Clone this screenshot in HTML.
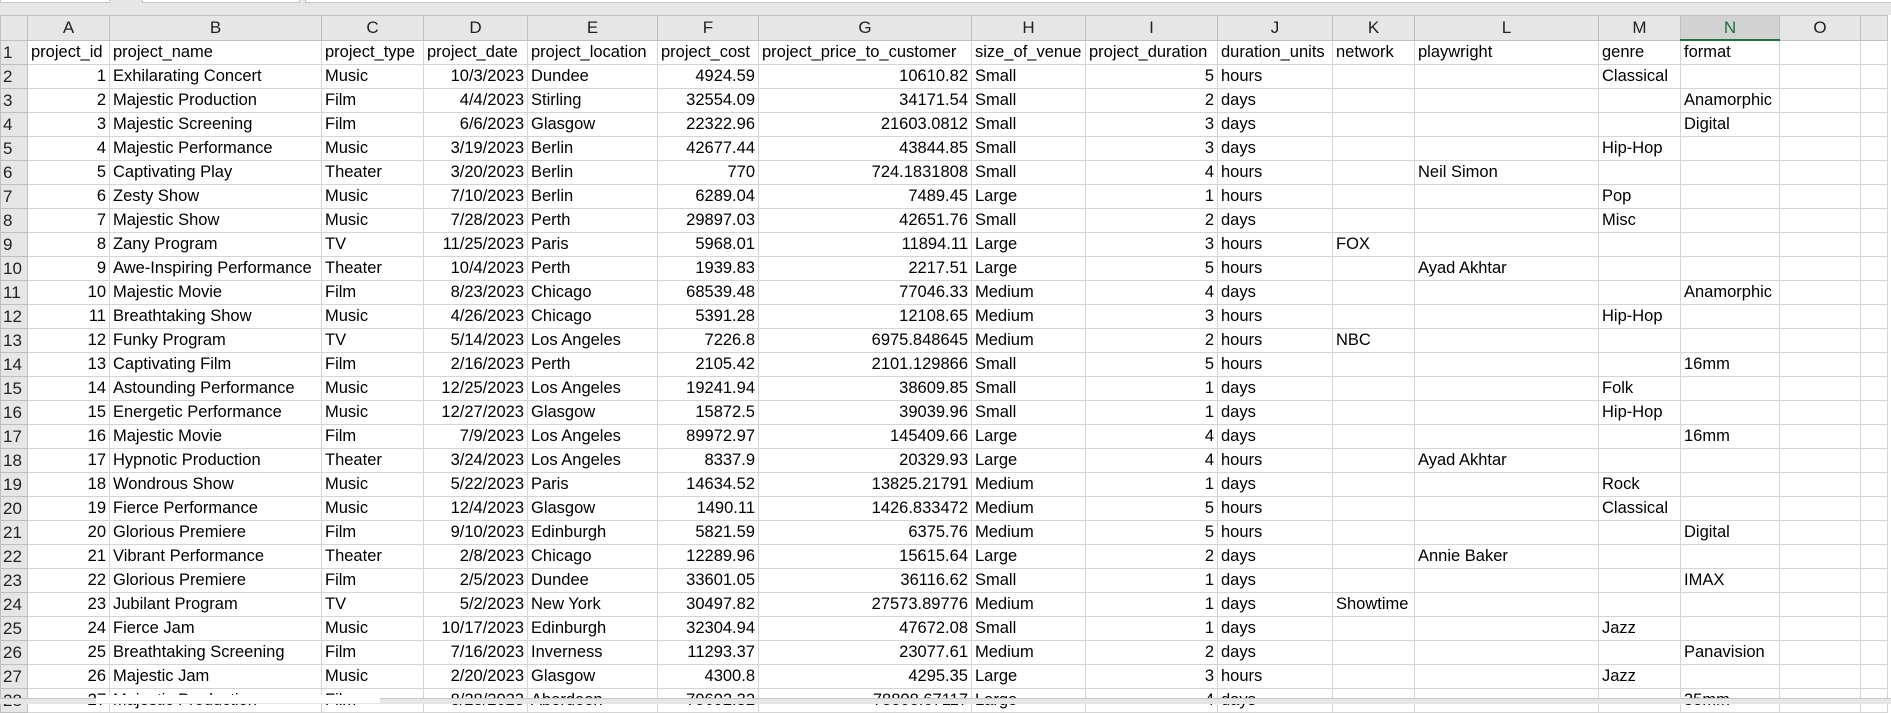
<!DOCTYPE html>
<html><head><meta charset="utf-8"><style>
html,body{margin:0;padding:0;width:1891px;height:703px;overflow:hidden;background:#fff;font-family:"Liberation Sans",sans-serif;}
#top{position:absolute;left:0;top:0;width:1891px;height:15px;background:#e6e6e6;}
.tabt{position:absolute;top:0;height:2px;background:#fff;border:1px solid #c6c6c6;border-top:none;}
#grid{position:absolute;left:0;top:15px;border-collapse:collapse;table-layout:fixed;}
#grid td{height:23px;border:1px solid #d4d4d4;padding:0 3px;font-size:16.5px;color:#000;white-space:nowrap;overflow:hidden;line-height:23px;}
#grid tr.h td{background:#e6e6e6;border-color:#bfbfbf;text-align:center;font-size:17px;color:#222;}
#grid td.rh{background:#e6e6e6;border-color:#bfbfbf;text-align:left;padding-left:2px;font-size:17px;color:#222;}
#grid td.r{text-align:right;}
#grid tr.h td.sel{background:#d2d2d2;color:#217346;border-bottom:2px solid #217346;}
#bot{position:absolute;left:0;top:698px;width:1891px;height:5px;background:#e6e6e6;border-top:1px solid #c6c6c6;}
#tab{position:absolute;left:96px;top:695px;width:284px;height:8px;background:#fff;}
</style></head><body>
<div id="top"><div class="tabt" style="left:0;width:108px"></div><div class="tabt" style="left:142px;width:156px"></div><div class="tabt" style="left:305px;width:1586px"></div></div>
<table id="grid">
<colgroup><col style="width:27px"><col style="width:82px"><col style="width:212px"><col style="width:102px"><col style="width:104px"><col style="width:130px"><col style="width:101px"><col style="width:213px"><col style="width:114px"><col style="width:132px"><col style="width:115px"><col style="width:82px"><col style="width:184px"><col style="width:82px"><col style="width:99px"><col style="width:81px"><col style="width:27px"></colgroup>
<tr class="h"><td style="background:#e6e6e6"></td><td>A</td><td>B</td><td>C</td><td>D</td><td>E</td><td>F</td><td>G</td><td>H</td><td>I</td><td>J</td><td>K</td><td>L</td><td>M</td><td class="sel">N</td><td>O</td><td></td></tr>
<tr><td class="rh">1</td><td>project_id</td><td>project_name</td><td>project_type</td><td>project_date</td><td>project_location</td><td>project_cost</td><td>project_price_to_customer</td><td>size_of_venue</td><td>project_duration</td><td>duration_units</td><td>network</td><td>playwright</td><td>genre</td><td>format</td><td></td><td></td></tr>
<tr><td class="rh">2</td><td class="r">1</td><td>Exhilarating Concert</td><td>Music</td><td class="r">10/3/2023</td><td>Dundee</td><td class="r">4924.59</td><td class="r">10610.82</td><td>Small</td><td class="r">5</td><td>hours</td><td></td><td></td><td>Classical</td><td></td><td></td><td></td></tr>
<tr><td class="rh">3</td><td class="r">2</td><td>Majestic Production</td><td>Film</td><td class="r">4/4/2023</td><td>Stirling</td><td class="r">32554.09</td><td class="r">34171.54</td><td>Small</td><td class="r">2</td><td>days</td><td></td><td></td><td></td><td>Anamorphic</td><td></td><td></td></tr>
<tr><td class="rh">4</td><td class="r">3</td><td>Majestic Screening</td><td>Film</td><td class="r">6/6/2023</td><td>Glasgow</td><td class="r">22322.96</td><td class="r">21603.0812</td><td>Small</td><td class="r">3</td><td>days</td><td></td><td></td><td></td><td>Digital</td><td></td><td></td></tr>
<tr><td class="rh">5</td><td class="r">4</td><td>Majestic Performance</td><td>Music</td><td class="r">3/19/2023</td><td>Berlin</td><td class="r">42677.44</td><td class="r">43844.85</td><td>Small</td><td class="r">3</td><td>days</td><td></td><td></td><td>Hip-Hop</td><td></td><td></td><td></td></tr>
<tr><td class="rh">6</td><td class="r">5</td><td>Captivating Play</td><td>Theater</td><td class="r">3/20/2023</td><td>Berlin</td><td class="r">770</td><td class="r">724.1831808</td><td>Small</td><td class="r">4</td><td>hours</td><td></td><td>Neil Simon</td><td></td><td></td><td></td><td></td></tr>
<tr><td class="rh">7</td><td class="r">6</td><td>Zesty Show</td><td>Music</td><td class="r">7/10/2023</td><td>Berlin</td><td class="r">6289.04</td><td class="r">7489.45</td><td>Large</td><td class="r">1</td><td>hours</td><td></td><td></td><td>Pop</td><td></td><td></td><td></td></tr>
<tr><td class="rh">8</td><td class="r">7</td><td>Majestic Show</td><td>Music</td><td class="r">7/28/2023</td><td>Perth</td><td class="r">29897.03</td><td class="r">42651.76</td><td>Small</td><td class="r">2</td><td>days</td><td></td><td></td><td>Misc</td><td></td><td></td><td></td></tr>
<tr><td class="rh">9</td><td class="r">8</td><td>Zany Program</td><td>TV</td><td class="r">11/25/2023</td><td>Paris</td><td class="r">5968.01</td><td class="r">11894.11</td><td>Large</td><td class="r">3</td><td>hours</td><td>FOX</td><td></td><td></td><td></td><td></td><td></td></tr>
<tr><td class="rh">10</td><td class="r">9</td><td>Awe-Inspiring Performance</td><td>Theater</td><td class="r">10/4/2023</td><td>Perth</td><td class="r">1939.83</td><td class="r">2217.51</td><td>Large</td><td class="r">5</td><td>hours</td><td></td><td>Ayad Akhtar</td><td></td><td></td><td></td><td></td></tr>
<tr><td class="rh">11</td><td class="r">10</td><td>Majestic Movie</td><td>Film</td><td class="r">8/23/2023</td><td>Chicago</td><td class="r">68539.48</td><td class="r">77046.33</td><td>Medium</td><td class="r">4</td><td>days</td><td></td><td></td><td></td><td>Anamorphic</td><td></td><td></td></tr>
<tr><td class="rh">12</td><td class="r">11</td><td>Breathtaking Show</td><td>Music</td><td class="r">4/26/2023</td><td>Chicago</td><td class="r">5391.28</td><td class="r">12108.65</td><td>Medium</td><td class="r">3</td><td>hours</td><td></td><td></td><td>Hip-Hop</td><td></td><td></td><td></td></tr>
<tr><td class="rh">13</td><td class="r">12</td><td>Funky Program</td><td>TV</td><td class="r">5/14/2023</td><td>Los Angeles</td><td class="r">7226.8</td><td class="r">6975.848645</td><td>Medium</td><td class="r">2</td><td>hours</td><td>NBC</td><td></td><td></td><td></td><td></td><td></td></tr>
<tr><td class="rh">14</td><td class="r">13</td><td>Captivating Film</td><td>Film</td><td class="r">2/16/2023</td><td>Perth</td><td class="r">2105.42</td><td class="r">2101.129866</td><td>Small</td><td class="r">5</td><td>hours</td><td></td><td></td><td></td><td>16mm</td><td></td><td></td></tr>
<tr><td class="rh">15</td><td class="r">14</td><td>Astounding Performance</td><td>Music</td><td class="r">12/25/2023</td><td>Los Angeles</td><td class="r">19241.94</td><td class="r">38609.85</td><td>Small</td><td class="r">1</td><td>days</td><td></td><td></td><td>Folk</td><td></td><td></td><td></td></tr>
<tr><td class="rh">16</td><td class="r">15</td><td>Energetic Performance</td><td>Music</td><td class="r">12/27/2023</td><td>Glasgow</td><td class="r">15872.5</td><td class="r">39039.96</td><td>Small</td><td class="r">1</td><td>days</td><td></td><td></td><td>Hip-Hop</td><td></td><td></td><td></td></tr>
<tr><td class="rh">17</td><td class="r">16</td><td>Majestic Movie</td><td>Film</td><td class="r">7/9/2023</td><td>Los Angeles</td><td class="r">89972.97</td><td class="r">145409.66</td><td>Large</td><td class="r">4</td><td>days</td><td></td><td></td><td></td><td>16mm</td><td></td><td></td></tr>
<tr><td class="rh">18</td><td class="r">17</td><td>Hypnotic Production</td><td>Theater</td><td class="r">3/24/2023</td><td>Los Angeles</td><td class="r">8337.9</td><td class="r">20329.93</td><td>Large</td><td class="r">4</td><td>hours</td><td></td><td>Ayad Akhtar</td><td></td><td></td><td></td><td></td></tr>
<tr><td class="rh">19</td><td class="r">18</td><td>Wondrous Show</td><td>Music</td><td class="r">5/22/2023</td><td>Paris</td><td class="r">14634.52</td><td class="r">13825.21791</td><td>Medium</td><td class="r">1</td><td>days</td><td></td><td></td><td>Rock</td><td></td><td></td><td></td></tr>
<tr><td class="rh">20</td><td class="r">19</td><td>Fierce Performance</td><td>Music</td><td class="r">12/4/2023</td><td>Glasgow</td><td class="r">1490.11</td><td class="r">1426.833472</td><td>Medium</td><td class="r">5</td><td>hours</td><td></td><td></td><td>Classical</td><td></td><td></td><td></td></tr>
<tr><td class="rh">21</td><td class="r">20</td><td>Glorious Premiere</td><td>Film</td><td class="r">9/10/2023</td><td>Edinburgh</td><td class="r">5821.59</td><td class="r">6375.76</td><td>Medium</td><td class="r">5</td><td>hours</td><td></td><td></td><td></td><td>Digital</td><td></td><td></td></tr>
<tr><td class="rh">22</td><td class="r">21</td><td>Vibrant Performance</td><td>Theater</td><td class="r">2/8/2023</td><td>Chicago</td><td class="r">12289.96</td><td class="r">15615.64</td><td>Large</td><td class="r">2</td><td>days</td><td></td><td>Annie Baker</td><td></td><td></td><td></td><td></td></tr>
<tr><td class="rh">23</td><td class="r">22</td><td>Glorious Premiere</td><td>Film</td><td class="r">2/5/2023</td><td>Dundee</td><td class="r">33601.05</td><td class="r">36116.62</td><td>Small</td><td class="r">1</td><td>days</td><td></td><td></td><td></td><td>IMAX</td><td></td><td></td></tr>
<tr><td class="rh">24</td><td class="r">23</td><td>Jubilant Program</td><td>TV</td><td class="r">5/2/2023</td><td>New York</td><td class="r">30497.82</td><td class="r">27573.89776</td><td>Medium</td><td class="r">1</td><td>days</td><td>Showtime</td><td></td><td></td><td></td><td></td><td></td></tr>
<tr><td class="rh">25</td><td class="r">24</td><td>Fierce Jam</td><td>Music</td><td class="r">10/17/2023</td><td>Edinburgh</td><td class="r">32304.94</td><td class="r">47672.08</td><td>Small</td><td class="r">1</td><td>days</td><td></td><td></td><td>Jazz</td><td></td><td></td><td></td></tr>
<tr><td class="rh">26</td><td class="r">25</td><td>Breathtaking Screening</td><td>Film</td><td class="r">7/16/2023</td><td>Inverness</td><td class="r">11293.37</td><td class="r">23077.61</td><td>Medium</td><td class="r">2</td><td>days</td><td></td><td></td><td></td><td>Panavision</td><td></td><td></td></tr>
<tr><td class="rh">27</td><td class="r">26</td><td>Majestic Jam</td><td>Music</td><td class="r">2/20/2023</td><td>Glasgow</td><td class="r">4300.8</td><td class="r">4295.35</td><td>Large</td><td class="r">3</td><td>hours</td><td></td><td></td><td>Jazz</td><td></td><td></td><td></td></tr>
<tr><td class="rh">28</td><td class="r">27</td><td>Majestic Production</td><td>Film</td><td class="r">8/28/2023</td><td>Aberdeen</td><td class="r">79692.32</td><td class="r">78808.67117</td><td>Large</td><td class="r">4</td><td>days</td><td></td><td></td><td></td><td>35mm</td><td></td><td></td></tr>
</table>
<div id="bot"></div><div id="tab"></div>
</body></html>
